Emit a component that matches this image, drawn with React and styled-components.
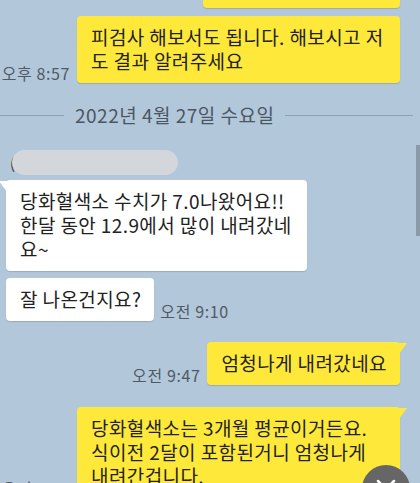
import React from "react";
import styled, { createGlobalStyle, css } from "styled-components";

const Global = createGlobalStyle`
  html, body { margin: 0; padding: 0; overflow: hidden; }
  body { font-family: "Noto Sans CJK KR", "Noto Sans", sans-serif; }
`;

const Screen = styled.div`
  position: relative;
  width: 420px;
  height: 483px;
  overflow: hidden;
  background: #b2c7da;
`;

const Feed = styled.div`
  display: flex;
  flex-direction: column;
`;

const Row = styled.div`
  display: flex;
  align-items: flex-end;
  gap: ${(p) => (p.$mine ? "7px" : "6px")};
  justify-content: ${(p) => (p.$mine ? "flex-end" : "flex-start")};
  padding: ${(p) => (p.$mine ? "0 20px 0 0" : "0 0 0 6px")};
  margin-top: ${(p) => p.$mt}px;
`;

const Bubble = styled.div`
  position: relative;
  box-sizing: border-box;
  background: ${(p) => (p.$mine ? "#fee93b" : "#ffffff")};
  color: #222;
  font-size: 19px;
  letter-spacing: 0.4px;
  line-height: 24px;
  padding: 9px 13px 10px 14px;
  border-radius: 4px;
  white-space: nowrap;
  box-shadow: 0 1px 1px rgba(0, 0, 0, 0.14);
  ${(p) =>
    p.$full &&
    css`
      width: ${p.$mine ? 323 : 301}px;
    `}
  ${(p) =>
    p.$tail &&
    css`
      &::before {
        content: "";
        position: absolute;
        top: 1px;
        width: 8px;
        height: 11px;
        background: inherit;
        ${p.$mine
          ? css`
              right: -7px;
              clip-path: polygon(0 0, 100% 0, 0 100%);
            `
          : css`
              left: -7px;
              clip-path: polygon(0 0, 100% 0, 100% 100%);
            `}
      }
    `}
`;

const Time = styled.span`
  flex-shrink: 0;
  font-size: 16px;
  letter-spacing: 0.6px;
  line-height: 20px;
  color: #4f5a65;
  white-space: nowrap;
`;

const Divider = styled.div`
  display: flex;
  align-items: center;
  margin-top: ${(p) => p.$mt}px;
  padding-right: 7px;
  height: 24px;
`;

const DividerLine = styled.div`
  height: 1px;
  background: #8ea1b4;
  flex: ${(p) => (p.$grow ? "1 1 auto" : "0 0 64px")};
`;

const DividerText = styled.span`
  margin: 0 11px;
  font-size: 19px;
  letter-spacing: 0.5px;
  line-height: 24px;
  color: #4b5663;
  white-space: nowrap;
`;

const NameRow = styled.div`
  display: flex;
  align-items: center;
  height: 25px;
  padding-left: 10px;
  margin-top: ${(p) => p.$mt}px;
  font-size: 15px;
  color: #333;
`;

const NameBlur = styled.div`
  width: 166px;
  height: 25px;
  margin-left: -3px;
  border-radius: 13px;
  background: #d3d6da;
`;

const ScrollThumb = styled.div`
  position: absolute;
  right: 0;
  top: 145px;
  width: 4px;
  height: 91px;
  background: #8b9aa9;
`;

const Fab = styled.div`
  position: absolute;
  left: 362px;
  top: 465px;
  width: 48px;
  height: 48px;
  border-radius: 50%;
  background: #666666;
  display: flex;
  align-items: flex-start;
  justify-content: center;
`;

export default function App() {
  return (
    <Screen>
      <Global />
      <Feed>
        <Row $mine $mt={-35}>
          <Bubble $mine $tail>네 알겠습니다 선생님</Bubble>
        </Row>
        <Row $mine $mt={8}>
          <Time>오후 8:57</Time>
          <Bubble $mine $full>
            피검사 해보서도 됩니다. 해보시고 저
            <br />도 결과 알려주세요
          </Bubble>
        </Row>

        <Divider $mt={20}>
          <DividerLine />
          <DividerText>2022년 4월 27일 수요일</DividerText>
          <DividerLine $grow />
        </Divider>

        <NameRow $mt={23}>
          <span>(</span>
          <NameBlur />
        </NameRow>
        <Row $mt={5}>
          <Bubble $tail $full>
            당화혈색소 수치가 7.0나왔어요!!
            <br />한달 동안 12.9에서 많이 내려갔네
            <br />요~
          </Bubble>
        </Row>
        <Row $mt={7}>
          <Bubble>잘 나온건지요?</Bubble>
          <Time>오전 9:10</Time>
        </Row>

        <Row $mine $mt={21}>
          <Time>오전 9:47</Time>
          <Bubble $mine $tail>엄청나게 내려갔네요</Bubble>
        </Row>
        <Row $mine $mt={22}>
          <Time>오전 9:48</Time>
          <Bubble $mine $tail $full>
            당화혈색소는 3개월 평균이거든요.
            <br />식이전 2달이 포함된거니 엄청나게
            <br />내려간겁니다.
          </Bubble>
        </Row>
      </Feed>

      <ScrollThumb />
      <Fab>
        <svg width="48" height="30" viewBox="0 0 48 30">
          <polyline
            points="16,16 24,24 32,16"
            fill="none"
            stroke="#ffffff"
            strokeWidth="2.5"
            strokeLinecap="round"
            strokeLinejoin="round"
          />
        </svg>
      </Fab>
    </Screen>
  );
}
